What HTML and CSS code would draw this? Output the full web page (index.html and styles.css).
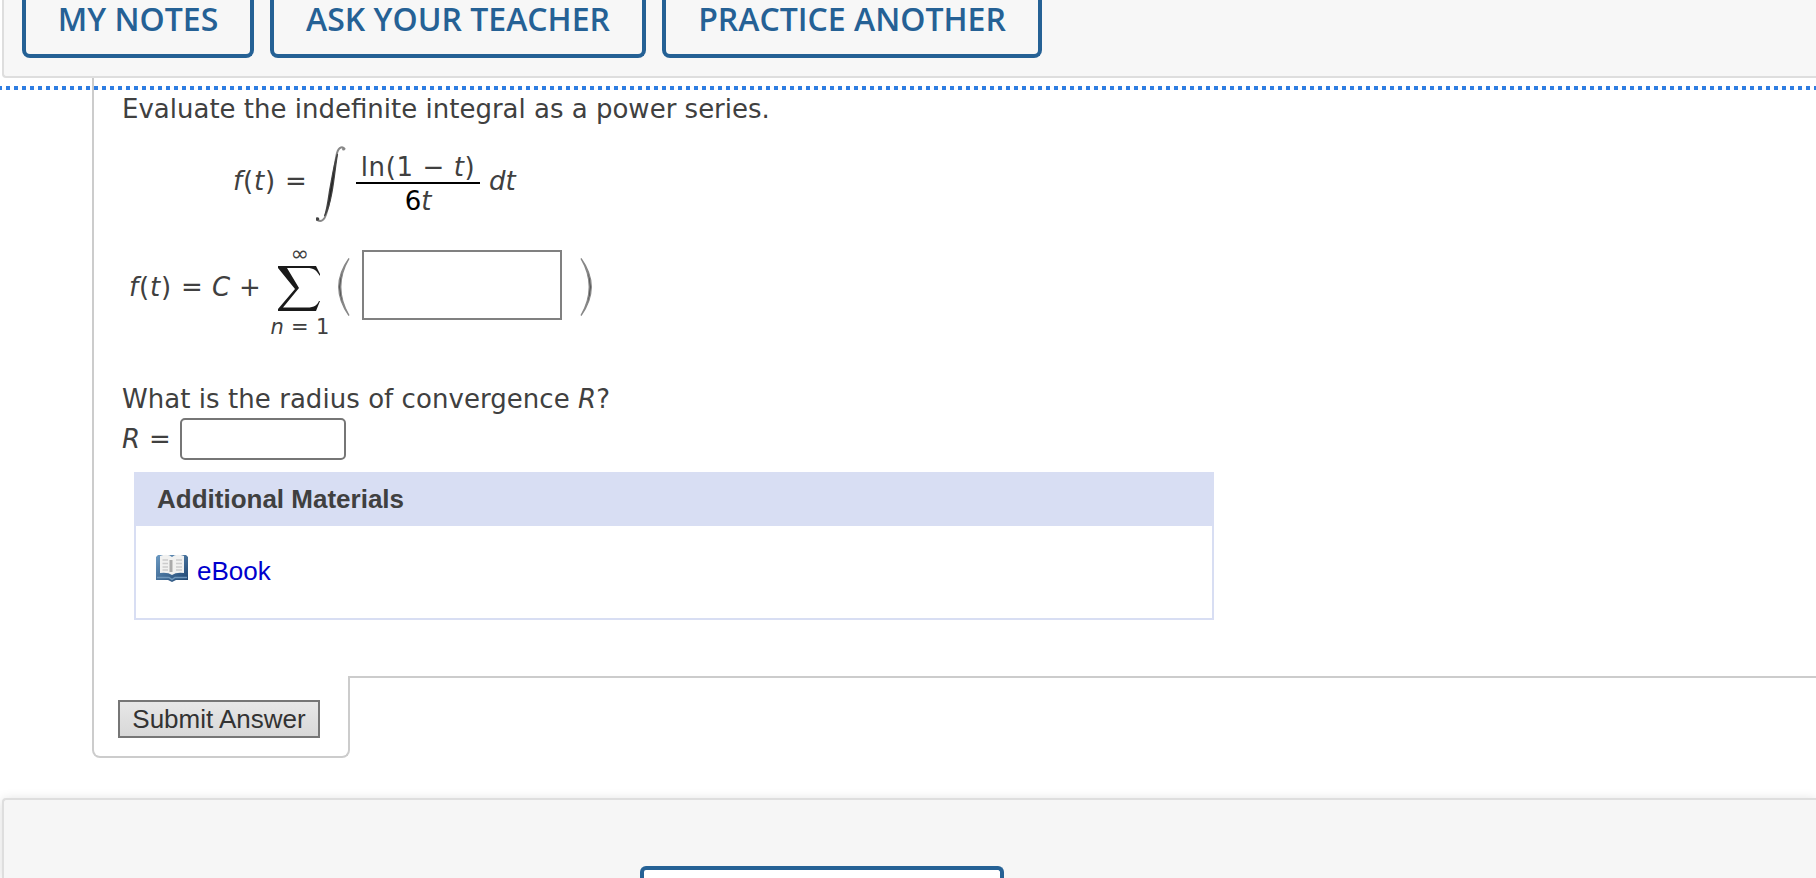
FILE: index.html
```
<!DOCTYPE html>
<html lang="en">
<head>
    <meta charset="UTF-8">
    <meta name="viewport" content="width=device-width, initial-scale=1.0">
    <title>Power Series Question</title>
    <link rel="stylesheet" href="styles.css">
</head>
<body>
    <!-- Question tools -->
    <header class="toolbar">
        <button class="tool-btn btn-notes">MY NOTES</button>
        <button class="tool-btn btn-ask">ASK YOUR TEACHER</button>
        <button class="tool-btn btn-practice">PRACTICE ANOTHER</button>
    </header>
    <div class="dotted-line"></div>

    <!-- Question -->
    <main class="question">
        <p class="text intro">Evaluate the indefinite integral as a power series.</p>

        <div class="equation integral-row">
            <span class="ft"><i>f</i>(<i>t</i>)</span>
            <span class="eq">=</span>
            <svg class="integral" width="30" height="76" viewBox="0 0 30 76">
                <path d="M29 3.500C27 0 23 0.500 21 7C18.500 18 17.500 31 15 45C13 58 12 66 8.500 72C6 76 2 76 0 72" fill="none" stroke="#888" stroke-width="2"/>
                <path d="M21.500 8C18 18 16.500 29 13.500 45C12 55 11 64 8.500 70C12 65 14 57 16 46C18.500 32 19.500 19 21.500 8Z" fill="#222" stroke="#444" stroke-width="1.300"/>
                <circle cx="27.500" cy="3" r="1.500" fill="#888"/>
                <circle cx="1.500" cy="73" r="1.800" fill="#444"/>
            </svg>
            <span class="fraction">
                <span class="numerator">ln(1 − <i>t</i>)</span>
                <span class="denominator">6<i>t</i></span>
            </span>
            <span class="dt"><i>dt</i></span>
        </div>

        <div class="equation sum-row">
            <span class="ft"><i>f</i>(<i>t</i>)</span>
            <span class="eq">=</span>
            <span class="const"><i>C</i></span>
            <span class="plus">+</span>
            <span class="sum">
                <span class="upper">∞</span>
                <svg class="sigma" width="42" height="46" viewBox="0 0 42 46">
                    <path d="M0 0H38L42 8V10C38 4 36 2 29 2H9L21 22L5 41.500H29C37 41.500 39 39 41 35H42L38 45H0V43L17 23L0 2Z" fill="#1a1a1a"/>
                </svg>
                <span class="lower"><i>n</i> = 1</span>
            </span>
            <svg class="paren" width="14" height="58" viewBox="0 0 14 58">
                <path d="M12 0.500Q-8.500 29 12 57.500Q-4.500 29 12 0.500Z" fill="#333" stroke="#888" stroke-width="1.300"/>
            </svg>
            <input class="answer-box" type="text">
            <svg class="paren right" width="14" height="58" viewBox="0 0 14 58">
                <path d="M1 0.500Q21.500 29 1 57.500Q17.500 29 1 0.500Z" fill="#333" stroke="#888" stroke-width="1.300"/>
            </svg>
        </div>

        <p class="text radius">What is the radius of convergence <i>R</i>?</p>
        <div class="radius-row">
            <span class="r"><i>R</i></span>
            <span class="eq">=</span>
            <input class="radius-input" type="text">
        </div>

        <!-- Additional materials -->
        <section class="materials">
            <h3>Additional Materials</h3>
            <a class="ebook" href="#">
                <svg width="32" height="30" viewBox="0 0 32 30">
                    <defs>
                        <linearGradient id="cover" x1="0" y1="0" x2="1" y2="1">
                            <stop offset="0" stop-color="#6d9bc3"/>
                            <stop offset="1" stop-color="#1c436f"/>
                        </linearGradient>
                    </defs>
                    <path d="M0 4L2 2H30L32 4V27H20L16 29L12 27H0Z" fill="url(#cover)"/>
                    <path d="M1 24.500H13L16 26.500L19 24.500H31" fill="none" stroke="#6f97bb" stroke-width="1.500"/>
                    <path d="M4 3Q12 0 16 4Q20 0 28 3V20Q20 19 16 22Q12 19 4 20Z" fill="#f1f1f0"/>
                    <path d="M6.500 7H12M6.500 10.500H12M6.500 14H12M6.500 17H12M20 7H26M20 10.500H26M20 14H26M20 17H26" stroke="#ccc" stroke-width="1.300"/>
                    <path d="M15 7V19" stroke="#aaa" stroke-width="3"/>
                </svg>
                <span>eBook</span>
            </a>
        </section>
    </main>

    <div class="submit-row">
        <div class="submit-tab">
            <button class="submit-btn">Submit Answer</button>
        </div>
        <div class="submit-line"></div>
    </div>

    <!-- Bottom panel -->
    <footer class="bottom-panel">
        <div class="bottom-btn"></div>
    </footer>
</body>
</html>
```
FILE: styles.css
```
* {
    box-sizing: border-box;
}

body {
    margin: 0;
    height: 878px;
    overflow: hidden;
    background-color: #fff;
    color: #404040;
    font-family: Verdana, "DejaVu Sans", sans-serif;
    font-size: 26px;
    line-height: 32px;
}

p, h3 {
    margin: 0;
}

/* Toolbar */
.toolbar {
    display: flex;
    gap: 16px;
    height: 78px;
    margin-left: 2px;
    padding: 0 18px 18px;
    background-color: #f7f7f7;
    border-left: 2px solid #dedede;
    border-bottom: 2px solid #dedede;
    border-bottom-left-radius: 4px;
}

.tool-btn {
    height: 58px;
    padding: 2px 0 18px;
    background-color: transparent;
    border: 4px solid #256195;
    border-top: none;
    border-radius: 0 0 8px 8px;
    color: #256195;
    font-family: "Open Sans", sans-serif;
    font-size: 32px;
    font-weight: 600;
    line-height: 34px;
    white-space: nowrap;
}

.btn-notes {
    width: 232px;
}

.btn-ask {
    width: 376px;
}

.btn-practice {
    width: 380px;
}

.dotted-line {
    position: absolute;
    top: 86px;
    left: 0;
    width: 100%;
    height: 4px;
    background: repeating-linear-gradient(to right, #2f7de1 0 4px, transparent 4px 8px) -2px 0 / 1824px 4px;
}

/* Question */
.question {
    height: 598px;
    margin-left: 92px;
    padding: 15px 0 0 28px;
    border-left: 2px solid #ccc;
}

.equation {
    display: flex;
    align-items: flex-start;
    white-space: nowrap;
}

.integral-row {
    height: 76px;
    margin-top: 21px;
    padding-left: 111px;
}

.integral-row .ft,
.integral-row .eq,
.integral-row .dt {
    margin-top: 19px;
}

.ft {
    width: 52px;
    letter-spacing: 0.8px;
}

.eq {
    width: 31px;
}

.fraction {
    width: 124px;
    margin: 5px 9px 0 10px;
    text-align: center;
}

.numerator {
    display: block;
    height: 33px;
    border-bottom: 2px solid #000;
    letter-spacing: 0.6px;
}

.denominator {
    display: block;
    margin-top: 1px;
    color: #000;
}

.denominator i {
    color: #404040;
}

.sum-row {
    height: 92px;
    margin-top: 28px;
    padding-left: 7px;
}

.sum-row .ft,
.sum-row .eq,
.const,
.plus {
    margin-top: 21px;
}

.const {
    width: 27px;
}

.plus {
    width: 32px;
}

.sum {
    display: flex;
    flex-direction: column;
    align-items: center;
    width: 58px;
}

.upper {
    height: 16px;
    font-size: 22px;
    line-height: 8px;
}

.sigma {
    margin-right: 2px;
}

.lower {
    margin-top: 4px;
    font-size: 21px;
    line-height: 22px;
    letter-spacing: 0.3px;
}

.paren {
    margin: 8px 11px 0 8px;
}

.paren.right {
    margin: 8px 0 0 18px;
}

.answer-box {
    width: 200px;
    height: 70px;
    border: 2px solid #808080;
}

.radius {
    margin-top: 41px;
    letter-spacing: 0.05px;
}

.radius-row {
    display: flex;
    align-items: center;
    height: 42px;
    margin-top: 3px;
}

.radius-row .r {
    width: 27px;
}

.radius-input {
    width: 166px;
    height: 42px;
    border: 2px solid #767676;
    border-radius: 5px;
}

/* Additional materials */
.materials {
    width: 1080px;
    height: 148px;
    margin: 12px 0 0 12px;
    border: 2px solid #d8def3;
    font-family: Arial, "Liberation Sans", sans-serif;
}

.materials h3 {
    height: 52px;
    padding: 9px 21px;
    background-color: #d8def3;
    font-size: 26px;
}

.ebook {
    display: flex;
    gap: 9px;
    padding: 27px 20px;
    color: #0000cd;
    text-decoration: none;
}

.ebook span {
    margin-top: 2px;
}

/* Submit */
.submit-row {
    display: flex;
    height: 82px;
    margin-left: 92px;
}

.submit-tab {
    width: 258px;
    padding: 24px;
    border: 2px solid #ccc;
    border-top: none;
    border-radius: 0 0 8px 8px;
}

.submit-line {
    flex: 1;
    border-top: 2px solid #ccc;
}

.submit-btn {
    width: 202px;
    height: 38px;
    padding: 0;
    background: linear-gradient(#e7e7e7, #d8d8d8);
    border: 2px solid #767676;
    color: #333;
    font-family: Arial, "Liberation Sans", sans-serif;
    font-size: 26px;
    line-height: 34px;
}

/* Bottom panel */
.bottom-panel {
    height: 80px;
    margin: 40px 0 0 2px;
    padding: 66px 0 0 636px;
    background-color: #f6f6f6;
    border: 2px solid #dedede;
    border-right: none;
    border-bottom: none;
    border-top-left-radius: 4px;
    box-shadow: 0 2px 12px rgba(0, 0, 0, 0.15);
}

.bottom-btn {
    width: 364px;
    height: 12px;
    background-color: #fff;
    border: 4px solid #256195;
    border-bottom: none;
    border-radius: 6px 6px 0 0;
}
```
